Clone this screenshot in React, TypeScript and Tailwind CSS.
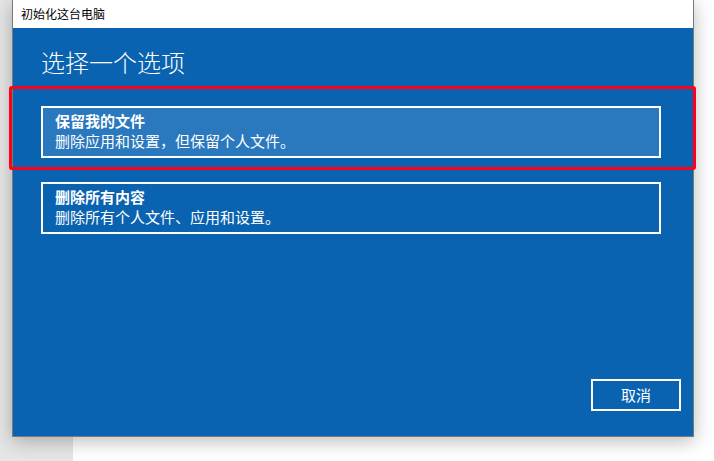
const cjk = { fontFamily: '"Noto Sans CJK SC", "Noto Sans", sans-serif' };

type OptionProps = {
  title: string;
  desc: string;
  active?: boolean;
};

const ResetOption = ({ title, desc, active }: OptionProps) => (
  <div
    className={`w-[620px] h-[52px] border-2 border-white px-[12px] pt-[3px] text-white ${
      active ? 'bg-[#2a78bd]' : 'bg-transparent'
    }`}
  >
    <div className="text-[15px] leading-[20px] font-bold">{title}</div>
    <div className="text-[15px] leading-[20px]">{desc}</div>
  </div>
);

export default function App() {
  return (
    <div className="relative w-[714px] h-[461px] overflow-hidden bg-white" style={cjk}>
      {/* window behind, peeking out on the left */}
      <div className="absolute left-0 top-0 w-[73px] h-full bg-[#e6e6e6]" />

      {/* reset dialog */}
      <div className="absolute left-[12px] top-0 w-[682px] h-[437px] flex flex-col border-x border-b border-[#7a7a7a] bg-white shadow-[0_4px_18px_rgba(0,0,0,0.28)]">
        <div className="h-[28px] flex items-center pl-[8px] text-[12px] text-black bg-white">
          初始化这台电脑
        </div>
        <div className="flex-1 flex flex-col bg-[#0a63b0] pl-[28px]">
          <h1 className="mt-[18px] text-[24px] leading-[32px] font-light text-white">选择一个选项</h1>
          <div className="mt-[28px] flex flex-col gap-[24px]">
            <ResetOption active title="保留我的文件" desc="删除应用和设置，但保留个人文件。" />
            <ResetOption title="删除所有内容" desc="删除所有个人文件、应用和设置。" />
          </div>
          <div className="flex-1" />
          <div className="flex justify-end pr-[12px] pb-[25px]">
            <button className="w-[90px] h-[32px] border-2 border-white text-[15px] text-white">
              取消
            </button>
          </div>
        </div>
      </div>

      {/* red highlight frame */}
      <div className="absolute left-[9px] top-[86px] w-[687px] h-[84px] border-[3px] border-[#ff0018] rounded-[3px]" />
    </div>
  );
}
